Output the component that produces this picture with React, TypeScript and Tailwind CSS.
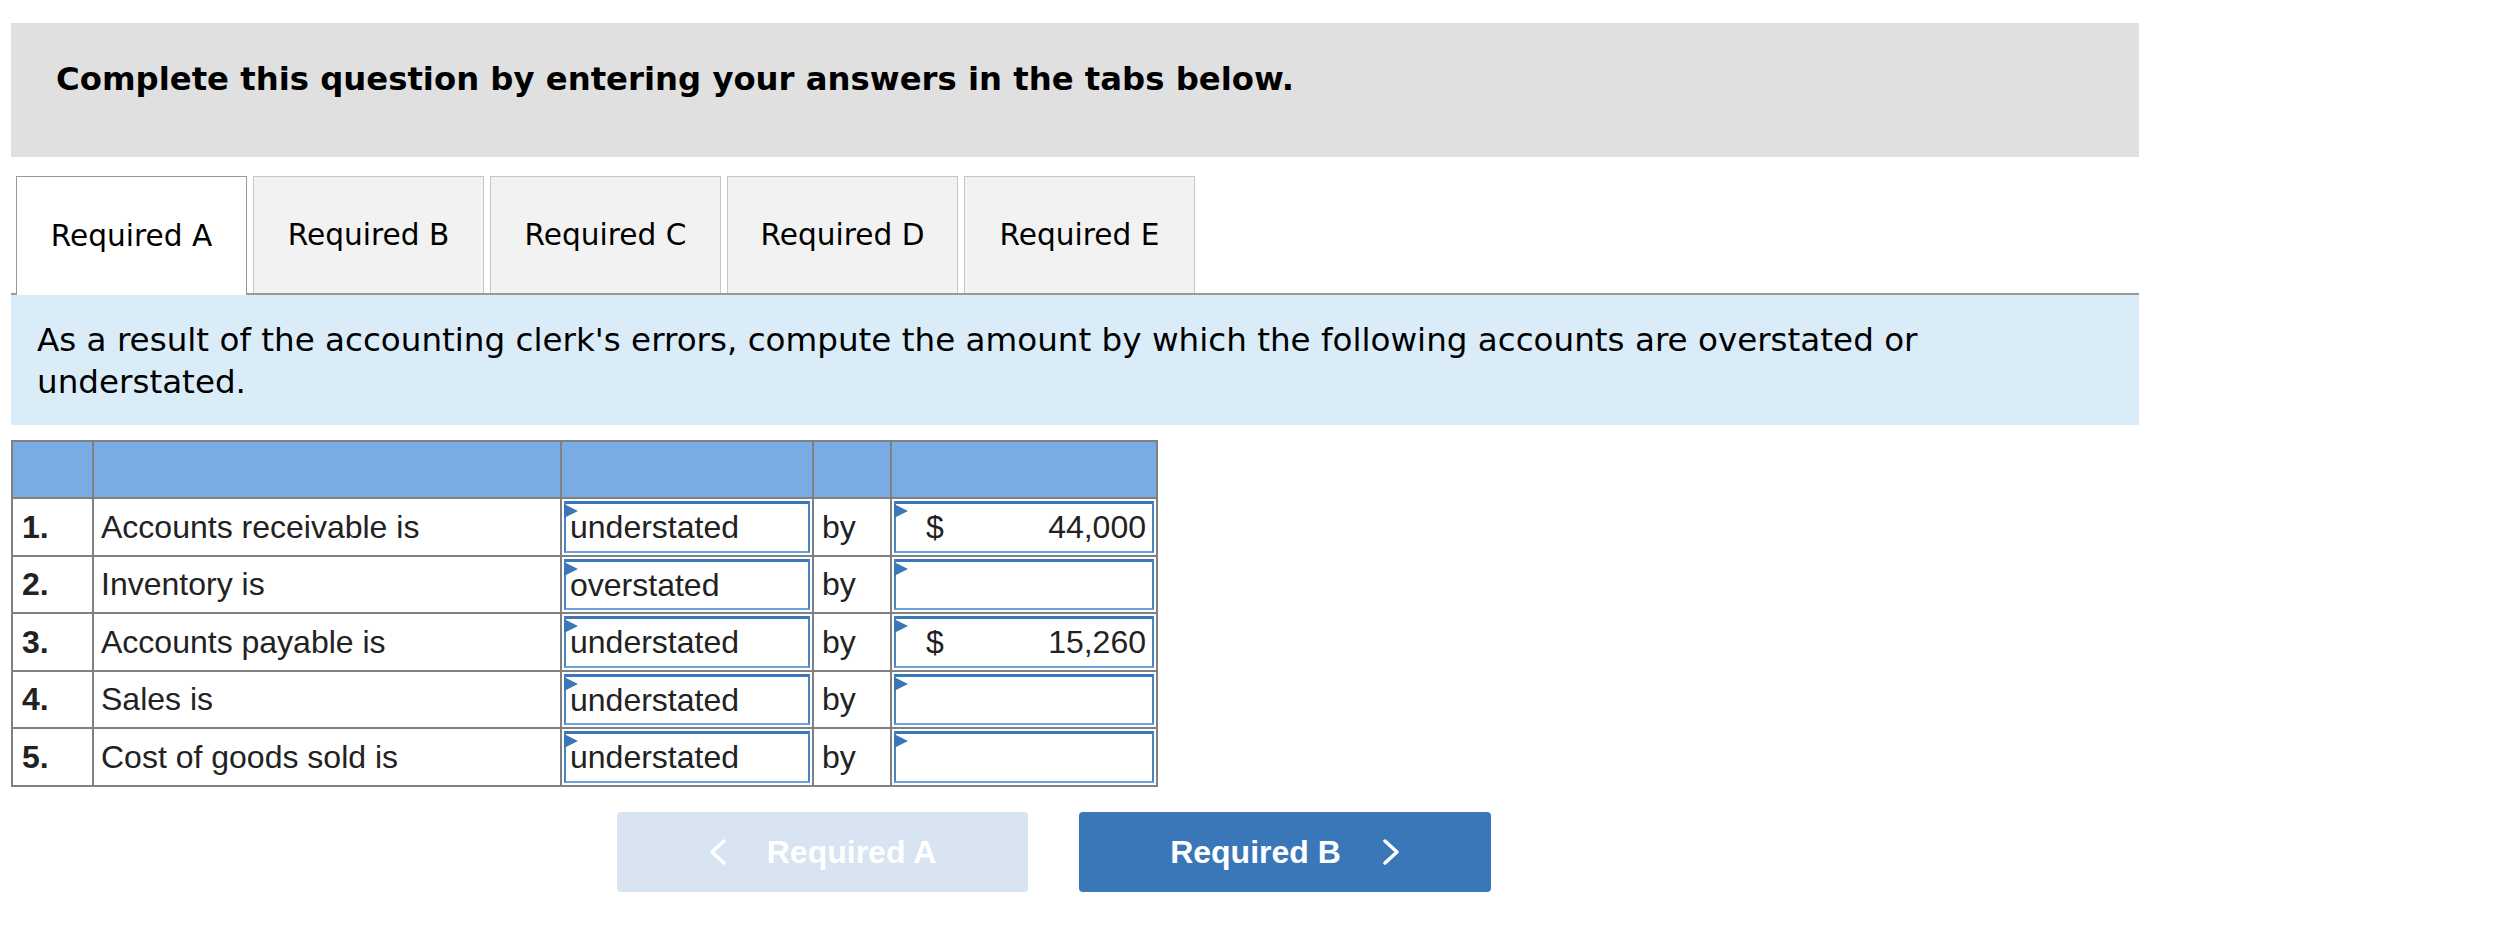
const verdana = { fontFamily: '"DejaVu Sans", Verdana, sans-serif' };

const tabs = ['Required A', 'Required B', 'Required C', 'Required D', 'Required E'];

const rows = [
  { n: '1.', label: 'Accounts receivable is', choice: 'understated', amount: '44,000' },
  { n: '2.', label: 'Inventory is', choice: 'overstated', amount: '' },
  { n: '3.', label: 'Accounts payable is', choice: 'understated', amount: '15,260' },
  { n: '4.', label: 'Sales is', choice: 'understated', amount: '' },
  { n: '5.', label: 'Cost of goods sold is', choice: 'understated', amount: '' },
];

function Marker() {
  return (
    <span className="absolute left-[-2px] top-[0px] w-0 h-0 border-y-[7px] border-y-transparent border-l-[14px] border-l-[#3a77b9]" />
  );
}

function InputBox({ children }: { children?: React.ReactNode }) {
  return (
    <div className="relative h-full w-full bg-white border-2 border-[#4a84c4] border-t-[3px] border-t-[#3a77b9] border-b-[#6fa2dc] flex items-center">
      <Marker />
      {children}
    </div>
  );
}

function Chevron({ dir }: { dir: 'left' | 'right' }) {
  return (
    <svg width="18" height="26" viewBox="0 0 18 26" fill="none">
      <polyline
        points={dir === 'left' ? '15,2 3,13 15,24' : '3,2 15,13 3,24'}
        stroke="white"
        strokeWidth="3.5"
        strokeLinecap="round"
        strokeLinejoin="round"
      />
    </svg>
  );
}

export default function App() {
  return (
    <div className="bg-white min-h-[925px] w-[2495px]">
      <div className="pl-[11px] pt-[23px] w-[2139px]">
        {/* Heading */}
        <div className="bg-[#e0e0e0] h-[134px] pl-[45px] pt-[36px]">
          <h1 className="text-[32.3px] leading-[40px] font-bold text-black" style={verdana}>
            Complete this question by entering your answers in the tabs below.
          </h1>
        </div>

        {/* Tabs */}
        <div className="mt-[19px] flex items-end gap-[6px] pl-[5px] border-b-2 border-[#999999]" style={verdana}>
          {tabs.map((t, i) =>
            i === 0 ? (
              <div
                key={t}
                className="w-[231px] h-[119px] -mb-[2px] bg-white border-[1.5px] border-b-0 border-[#999999] flex items-center justify-center text-[29.6px] text-black"
              >
                {t}
              </div>
            ) : (
              <div
                key={t}
                className="w-[231px] h-[117px] bg-[#f2f2f2] border-[1.5px] border-b-0 border-[#c6c6c6] flex items-center justify-center text-[29.6px] text-black"
              >
                {t}
              </div>
            )
          )}
        </div>

        {/* Instructions */}
        <div className="bg-[#dbecf9] h-[130px] pl-[26px] pr-[20px] pt-[24px]" style={verdana}>
          <p className="text-[32.6px] leading-[42px] text-black">
            As a result of the accounting clerk's errors, compute the amount by which the following accounts are overstated or understated.
          </p>
        </div>

        {/* Table */}
        <table
          className="mt-[15px] border-collapse border-2 border-[#808080] text-[32px] text-[#222222] table-fixed w-[1145px]"
          style={{ fontFamily: '"Liberation Sans", Arial, sans-serif' }}
        >
          <colgroup>
            <col className="w-[81px]" />
            <col className="w-[468px]" />
            <col className="w-[252px]" />
            <col className="w-[78px]" />
            <col className="w-[266px]" />
          </colgroup>
          <thead>
            <tr className="h-[57px] bg-[#79ace4]">
              <th className="border-2 border-[#808080]" />
              <th className="border-2 border-[#808080]" />
              <th className="border-2 border-[#808080]" />
              <th className="border-2 border-[#808080]" />
              <th className="border-2 border-[#808080]" />
            </tr>
          </thead>
          <tbody>
            {rows.map((r) => (
              <tr key={r.n} className="h-[57.5px]">
                <td className="border-2 border-[#808080] pl-[9px] font-bold leading-none">{r.n}</td>
                <td className="border-2 border-[#808080] pl-[7px] leading-none whitespace-nowrap">{r.label}</td>
                <td className="border-2 border-[#808080] p-[2px] h-[57.5px]">
                  <InputBox>
                    <span className="pl-[4px] leading-none">{r.choice}</span>
                  </InputBox>
                </td>
                <td className="border-2 border-[#808080] pl-[8px] leading-none">by</td>
                <td className="border-2 border-[#808080] p-[2px] h-[57.5px]">
                  <InputBox>
                    {r.amount && (
                      <div className="flex w-full items-center justify-between pl-[30px] pr-[6px] leading-none">
                        <span>$</span>
                        <span>{r.amount}</span>
                      </div>
                    )}
                  </InputBox>
                </td>
              </tr>
            ))}
          </tbody>
        </table>

        {/* Navigation */}
        <div
          className="mt-[25px] ml-[606px] flex gap-[51px] text-[32px] font-bold text-white"
          style={{ fontFamily: '"Liberation Sans", Arial, sans-serif' }}
        >
          <button className="w-[411px] h-[80px] rounded-[4px] bg-[#d8e4f1] flex items-center justify-center gap-[40px]">
            <Chevron dir="left" />
            <span>Required A</span>
          </button>
          <button className="w-[412px] h-[80px] rounded-[4px] bg-[#3a77b9] flex items-center justify-center gap-[41px]">
            <span>Required B</span>
            <Chevron dir="right" />
          </button>
        </div>
      </div>
    </div>
  );
}
